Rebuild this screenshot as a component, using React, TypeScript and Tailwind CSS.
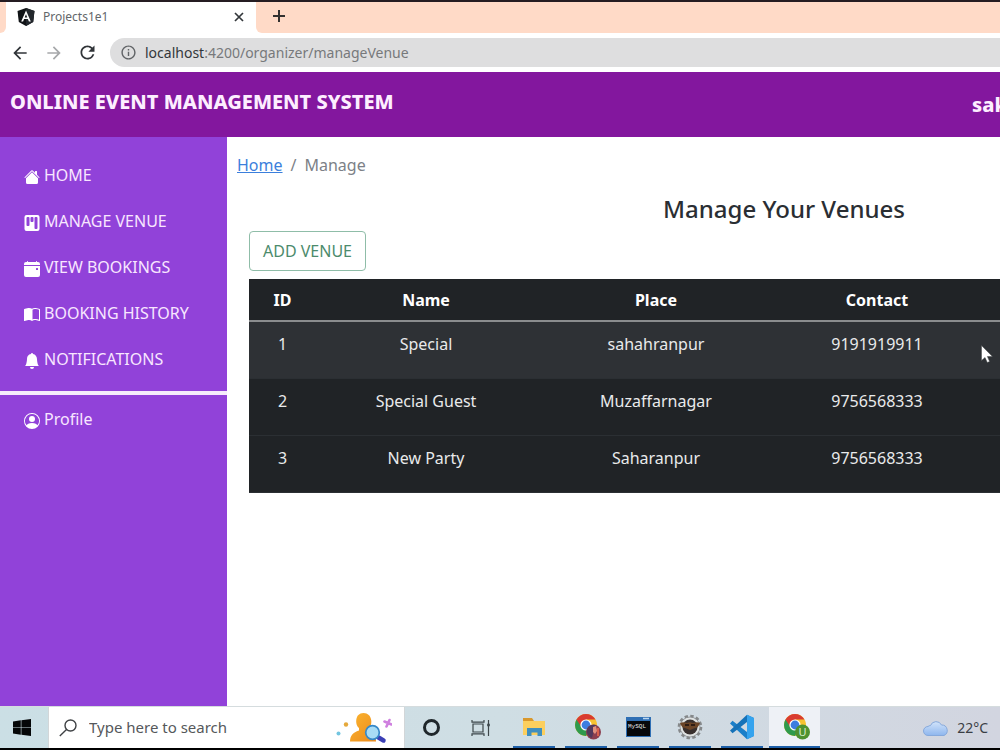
import React from "react";
import {
  BsHouseFill,
  BsKanbanFill,
  BsCalendarEventFill,
  BsBookHalf,
  BsBellFill,
  BsPersonCircle,
} from "react-icons/bs";
import { MdArrowBack, MdArrowForward, MdRefresh, MdInfoOutline } from "react-icons/md";

const links = [
  { label: "HOME", icon: BsHouseFill },
  { label: "MANAGE VENUE", icon: BsKanbanFill },
  { label: "VIEW BOOKINGS", icon: BsCalendarEventFill },
  { label: "BOOKING HISTORY", icon: BsBookHalf },
  { label: "NOTIFICATIONS", icon: BsBellFill },
];

const venues = [
  { id: 1, name: "Special", place: "sahahranpur", contact: "9191919911" },
  { id: 2, name: "Special Guest", place: "Muzaffarnagar", contact: "9756568333" },
  { id: 3, name: "New Party", place: "Saharanpur", contact: "9756568333" },
];

function AngularLogo() {
  return (
    <svg viewBox="0 0 18 18" className="h-[18px] w-[18px] shrink-0" aria-hidden="true">
      <path d="M9 0 17.5 3 16.2 14 9 18 1.8 14 .5 3Z" fill="#101316" />
      <path d="M9 0 17.5 3 16.2 14 9 18Z" fill="#22272c" />
      <path d="M9 2.6 4.2 13.4h1.9l1-2.4h3.8l1 2.4h1.9ZM9 6.2l1.3 3.2H7.7Z" fill="#fff" fillRule="evenodd" />
    </svg>
  );
}

function WindowsLogo() {
  return (
    <svg viewBox="0 0 18 17" className="h-[17px] w-[18px]" aria-hidden="true">
      <path d="M0 2.4 7.8 1.3V8.2H0ZM8.400 1.2 18 0v8.200H8.400ZM0 8.800h7.800v6.900L0 14.600ZM8.400 8.800H18V17l-9.600-1.200Z" fill="#050708" />
    </svg>
  );
}

function SearchArt() {
  return (
    <svg viewBox="0 0 56 32" className="h-8 w-14" aria-hidden="true">
      <defs>
        <linearGradient id="person" x1="0" y1="0" x2="1" y2="1">
          <stop offset="0" stopColor="#fbb52f" />
          <stop offset="1" stopColor="#ec8a1c" />
        </linearGradient>
      </defs>
      <circle cx="2.500" cy="21.500" r="2" fill="#73c5e0" />
      <circle cx="10" cy="12.500" r="2.200" fill="#e5a93c" />
      <path d="M14 29.500c0-6 3-9 9-11v-2.500C19 13 18.500 1 27.500 1s9.500 12 5.500 15v2.500c5 1.500 7 5 7 11Z" fill="url(#person)" />
      <path d="m42.500 25.500 5 3" stroke="#3b3fb5" strokeWidth="4.500" strokeLinecap="round" />
      <circle cx="36.500" cy="20.500" r="6.800" fill="#a8dcf5" stroke="#3688c8" strokeWidth="1.700" />
      <path d="m48.500 9.500 7 3m-5 2 3-6.500" stroke="#cf80df" strokeWidth="2.600" strokeLinecap="round" />
    </svg>
  );
}

function TaskViewIcon() {
  return (
    <svg viewBox="0 0 20 18" className="h-[18px] w-5" fill="none" stroke="#3d464a" strokeWidth="1.200" aria-hidden="true">
      <path d="M2 5h10v8H2ZM1 1v2.200h12V1M1 17v-2.200h12V17M17.500 1v16" />
      <path d="M16.200 6h2.600" strokeWidth="2.500" />
    </svg>
  );
}

function FolderIcon() {
  return (
    <svg viewBox="0 0 24 20" className="h-5 w-6" aria-hidden="true">
      <path d="M1 1h9l2 3h11v4H1Z" fill="#d9982c" />
      <path d="M1 4h22v14H1Z" fill="#fbcf5e" />
      <path d="M5 11h15v8h-4.500v-3.500h-6V19H5Z" fill="#3f8fbf" />
    </svg>
  );
}

function ChromeIcon({ badge }: { badge: "photo" | "letter" }) {
  return (
    <svg viewBox="0 0 28 28" className="ml-1 h-7 w-7 shrink-0" aria-hidden="true">
      <circle cx="12" cy="12" r="11" fill="#f7c331" />
      <path d="M2.500 6.500A11 11 0 0 0 12 23l4.500-8.500L12 12Z" fill="#2f9a4c" />
      <path d="M2.500 6.500A11 11 0 0 1 21.500 6.500H12v5.500L7 13.500Z" fill="#d93b30" />
      <circle cx="12" cy="12" r="5.600" fill="#fff" />
      <circle cx="12" cy="12" r="4.400" fill="#3d7de0" />
      {badge === "photo" ? (
        <g>
          <circle cx="19.500" cy="19" r="7.500" fill="#8a3f50" />
          <path d="M13 16a7.500 7.500 0 0 1 9-4l-2 5-2 8a7.500 7.500 0 0 1-5-9Z" fill="#52395c" />
          <path d="m19 14 3-1 1 5-2 3-2-2Z" fill="#e0917e" />
          <path d="M24 15v8" stroke="#d8604c" strokeWidth="2" />
        </g>
      ) : (
        <g>
          <circle cx="19.500" cy="19" r="7.500" fill="#4f9130" />
          <text x="19.500" y="23" textAnchor="middle" fontSize="11" fill="#dcefd0" fontFamily="Noto Sans, sans-serif">U</text>
        </g>
      )}
    </svg>
  );
}

function MySqlIcon() {
  return (
    <svg viewBox="0 0 25 20" className="h-5 w-[25px]" aria-hidden="true">
      <path d="M0 0h25v20H0Z" fill="#2f6fb4" />
      <path d="M1 4h23v15H1Z" fill="#06080b" />
      <path d="M17 1.500h6" stroke="#b9d7f0" strokeWidth="1.500" />
      <text x="2" y="11" fontSize="6" fill="#e8e8e8" fontFamily="Liberation Mono, monospace">MySQL</text>
    </svg>
  );
}

function GearBadgeIcon() {
  return (
    <svg viewBox="0 0 26 26" className="h-[26px] w-[26px]" aria-hidden="true">
      <circle cx="13" cy="13" r="10.800" fill="none" stroke="#85888a" strokeWidth="3" strokeDasharray="3.300 2.350" />
      <circle cx="13" cy="13" r="10" fill="#dfe2e2" stroke="#85888a" strokeWidth=".800" />
      <circle cx="13" cy="13" r="7.500" fill="#39302e" />
      <path d="M3 9c3-1.500 5-.5 7 0 2-1 4-1 6 0 2-.500 4-1.500 7 0-1 3-3 5-5 5l-5 2-5-2c-2 0-4-2-5-5Z" fill="#6b4528" />
      <path d="M8 11h4m2 0h4" stroke="#2f1d14" strokeWidth="2" />
    </svg>
  );
}

function VsCodeIcon() {
  return (
    <svg viewBox="0 0 26 26" className="h-[26px] w-[26px]" aria-hidden="true">
      <path d="M18 .8 25 4v18l-7 3.200L1 9.500l2.500-2.800L18 18Z" fill="#1b7fc9" />
      <path d="M18 .8 1 16.500l2.500 2.800L18 8Z" fill="#1672b8" />
      <path d="M18 .8 25 4v18l-7 3.200Z" fill="#35a3ee" />
    </svg>
  );
}

function CloudIcon() {
  return (
    <svg viewBox="0 0 26 18" className="h-[18px] w-[26px]" aria-hidden="true">
      <defs>
        <linearGradient id="cloud" x1="0" y1="0" x2="0" y2="1">
          <stop offset="0" stopColor="#d2e4fa" />
          <stop offset="1" stopColor="#8eb6ee" />
        </linearGradient>
      </defs>
      <path d="M5 16.500a4.500 4.500 0 0 1 0-9 4 4 0 0 1 2.500-1A6 6 0 0 1 18.500 6a5.500 5.500 0 0 1 2.500 10.500Z" fill="url(#cloud)" stroke="#86a9dc" />
    </svg>
  );
}

function BrowserChrome() {
  return (
    <header className="bg-white">
      <div className="flex h-[34px] border-t-2 border-[#251c22] bg-white">
        <div className="mb-px w-[6px] rounded-br-md bg-[#ffdac7]" />
        <div className="flex w-[250px] shrink-0 items-center pb-[3px] pl-[11px] pr-3">
          <AngularLogo />
          <span className="ml-2 flex-1 text-xs text-[#62666a]">Projects1e1</span>
          <button aria-label="Close tab">
            <svg viewBox="0 0 10 10" className="h-[10px] w-[10px]" stroke="#33373b" strokeWidth="1.700" aria-hidden="true">
              <path d="m1 1 8 8M9 1 1 9" />
            </svg>
          </button>
        </div>
        <div className="mb-px flex flex-1 items-center rounded-bl-md bg-[#ffdac7] pb-[3px] pl-4">
          <button aria-label="New tab">
            <svg viewBox="0 0 14 14" className="h-[14px] w-[14px]" stroke="#33302f" strokeWidth="2" aria-hidden="true">
              <path d="M7 1v12M1 7h12" />
            </svg>
          </button>
        </div>
      </div>
      <div className="flex h-[38px] items-center pb-px pl-[10px]">
        <button aria-label="Back" className="mr-[14px] text-[#303438]"><MdArrowBack className="h-5 w-5" /></button>
        <button aria-label="Forward" className="mr-[13px] text-[#a6a8aa]"><MdArrowForward className="h-5 w-5" /></button>
        <button aria-label="Reload" className="mr-3 text-[#303438]"><MdRefresh className="h-[21px] w-[21px]" /></button>
        <div className="flex h-[29px] flex-1 items-center rounded-l-full bg-[#dededf] pl-[10px]">
          <MdInfoOutline className="mr-2 h-[17px] w-[17px] text-[#606366]" />
          <span className="text-sm text-[#77797b]">
            <span className="text-[#33373a]">localhost</span>:4200/organizer/manageVenue
          </span>
        </div>
      </div>
    </header>
  );
}

function Sidebar() {
  return (
    <aside className="w-[227px] shrink-0 bg-[#9142d9] text-base text-[#f8e6ff]">
      <nav className="border-b-4 border-[#f6ecfb] pb-[9px] pt-[15px]">
        {links.map(({ label, icon: Icon }) => (
          <a key={label} href="#" className="flex h-[46px] items-center gap-1 pl-6">
            <Icon className="mt-1 h-4 w-4 text-white" />
            {label}
          </a>
        ))}
      </nav>
      <a href="#" className="flex h-12 items-center gap-1 pl-6">
        <BsPersonCircle className="mt-1 h-4 w-4 text-white" />
        Profile
      </a>
    </aside>
  );
}

function Content() {
  return (
    <main className="min-w-0 flex-1 overflow-hidden bg-white">
      <div className="w-[1114px]">
        <nav aria-label="Breadcrumb" className="flex gap-2 pl-[10px] pt-4 text-base text-[#7c8187]">
          <a href="#" className="text-[#3b7fdc] underline">Home</a>
          <span>/</span>
          <span>Manage</span>
        </nav>
        <h1 className="mt-4 text-center text-2xl font-medium text-[#2a2e33]">Manage Your Venues</h1>
        <div className="px-[22px] pt-[6px]">
          <button className="h-10 rounded border border-[#8fbda8] px-[13px] text-base text-[#4c8b6c]">ADD VENUE</button>
          <table className="mt-2 w-full table-fixed border-collapse bg-[#202326] text-center text-base text-[#e9eaeb]">
            <colgroup>
              <col className="w-[67px]" />
              <col className="w-[220px]" />
              <col className="w-[240px]" />
              <col className="w-[202px]" />
              <col />
            </colgroup>
            <thead>
              <tr className="h-[42px] border-b-2 border-[#8a8c8e] text-white">
                <th>ID</th>
                <th>Name</th>
                <th>Place</th>
                <th>Contact</th>
                <td />
              </tr>
            </thead>
            <tbody>
              {venues.map((v) => (
                <tr key={v.id} className="h-[57px] border-b border-[#2b2f33] align-top first:bg-[#2e3135]">
                  <td className="pt-[10px]">{v.id}</td>
                  <td className="pt-[10px]">{v.name}</td>
                  <td className="pt-[10px]">{v.place}</td>
                  <td className="pt-[10px]">{v.contact}</td>
                  <td />
                </tr>
              ))}
            </tbody>
          </table>
        </div>
      </div>
    </main>
  );
}

const apps = [
  { label: "File Explorer", icon: <FolderIcon /> },
  { label: "Chrome", icon: <ChromeIcon badge="photo" /> },
  { label: "MySQL", icon: <MySqlIcon /> },
  { label: "Tools", icon: <GearBadgeIcon /> },
  { label: "Visual Studio Code", icon: <VsCodeIcon /> },
];

function Taskbar() {
  return (
    <footer className="flex h-11 items-stretch border-b-2 border-t border-b-black border-t-[#d5dcde] bg-linear-to-r from-[#cbdfe5] via-[#cfdee4] to-[#d2d5e0]">
      <button aria-label="Start" className="flex w-12 items-center justify-center pr-1"><WindowsLogo /></button>
      <div className="flex w-[357px] items-center border-x border-[#d2d6d8] bg-white pl-[10px]">
        <svg viewBox="0 0 18 18" className="h-[18px] w-[18px]" fill="none" stroke="#3f4245" strokeWidth="1.400" aria-hidden="true">
          <circle cx="11.500" cy="6.500" r="5.500" />
          <path d="M7.500 10.500.8 17" />
        </svg>
        <input aria-label="Search" placeholder="Type here to search" className="ml-3 min-w-0 flex-1 text-[15px] outline-none placeholder:text-[#55585b]" />
        <SearchArt />
        <span className="w-3" />
      </div>
      <button aria-label="Cortana" className="flex w-[52px] items-center justify-center">
        <span className="h-[17px] w-[17px] rounded-full border-[3px] border-[#1f272b]" />
      </button>
      <button aria-label="Task view" className="flex w-12 items-center justify-center"><TaskViewIcon /></button>
      <div className="ml-2 flex gap-[10px]">
        {apps.map((a) => (
          <button key={a.label} aria-label={a.label} className="flex w-[42px] items-center justify-center border-b-2 border-[#1d5fa8]">{a.icon}</button>
        ))}
      </div>
      <button aria-label="Chrome, active" className="ml-[6px] flex w-[51px] items-center justify-center border-b-2 border-[#1d5fa8] bg-[#eef1f6]">
        <ChromeIcon badge="letter" />
      </button>
      <div className="ml-auto flex items-center gap-2 pr-3 text-sm text-[#3a3e45]">
        <CloudIcon />
        22°C
      </div>
    </footer>
  );
}

export default function App() {
  return (
    <div className="relative flex min-h-screen flex-col overflow-hidden bg-white font-['Noto_Sans',sans-serif]">
      <BrowserChrome />
      <div className="flex h-[65px] items-center justify-between overflow-hidden bg-[#83179e] pl-[10px] text-xl font-extrabold text-[#fdeeff]">
        <span className="pb-[6px]">ONLINE EVENT MANAGEMENT SYSTEM</span>
        <span className="w-7 whitespace-nowrap">sak</span>
      </div>
      <div className="flex flex-1">
        <Sidebar />
        <Content />
      </div>
      <Taskbar />
      <svg viewBox="0 0 12 18" className="absolute left-[981px] top-[345px] h-[18px] w-3" aria-hidden="true">
        <path d="M.5.500v15l3.500-3 2.300 5 2.300-1-2.200-5h5Z" fill="#fff" stroke="#45484b" strokeWidth=".5" />
      </svg>
    </div>
  );
}
